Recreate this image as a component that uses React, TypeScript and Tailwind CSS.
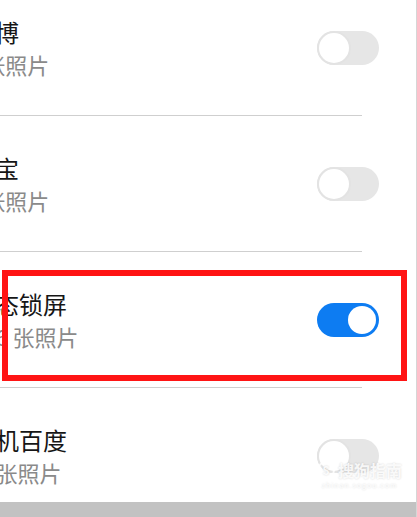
const rows = [
  { title: "微博", sub: "8张照片", on: false },
  { title: "淘宝", sub: "6张照片", on: false },
  { title: "动态锁屏", sub: "136 张照片", on: true },
  { title: "手机百度", sub: "12张照片", on: false },
]

function Toggle({ on }: { on: boolean }) {
  if (on) {
    return (
      <div className="flex h-[34px] w-[62px] shrink-0 items-center justify-end rounded-full bg-[#0d7cf2] p-[3px]">
        <div className="h-[28px] w-[28px] rounded-full bg-white" />
      </div>
    )
  }
  return (
    <div className="flex h-[34px] w-[62px] shrink-0 items-center rounded-full bg-[#e6e6e6]">
      <div className="h-[34px] w-[34px] rounded-full border-2 border-[#e3e3e3] bg-white" />
    </div>
  )
}

export default function App() {
  return (
    <div
      className="relative flex h-[517px] w-[417px] flex-col overflow-hidden border-r border-[#d6d6d6] bg-white"
      style={{ fontFamily: '"Noto Sans CJK SC", "Noto Sans", sans-serif' }}
    >
      <div className="flex-1 overflow-hidden">
        <div className="-mt-[20px] -ml-[29px]">
          {rows.map((row, i) => (
            <div key={i}>
              <div className="flex h-[135px] items-center pr-[37px]">
                <div className="flex flex-1 flex-col gap-[3px]">
                  <span className="text-[24px] leading-[30px] text-[#161616]">{row.title}</span>
                  <span className="text-[22px] leading-[28px] text-[#8a8a8a]">{row.sub}</span>
                </div>
                <Toggle on={row.on} />
              </div>
              <div className="mr-[54px] h-px bg-[#cfcfcf]" />
            </div>
          ))}
        </div>
      </div>
      <div className="h-[15px] shrink-0 bg-[#c2c2c2]" />

      {/* highlight box around the selected row */}
      <div className="absolute left-[2px] top-[270px] h-[111px] w-[405px] border-[6px] border-[#ff1414]" />

      {/* watermark */}
      <div className="absolute left-[317px] top-[459px] flex flex-col items-center text-white/85 [text-shadow:0_0_2px_rgba(0,0,0,0.18)]">
        <div className="flex items-center gap-[3px]">
          <span className="flex h-[18px] w-[18px] items-center justify-center rounded-full border-2 border-white/85 text-[11px] font-bold leading-none">
            S
          </span>
          <span className="text-[16px] font-bold leading-[22px]">搜狗指南</span>
        </div>
        <span className="text-[7px] leading-[9px] tracking-[1px]">zhinan.sogou.com</span>
      </div>
    </div>
  )
}
